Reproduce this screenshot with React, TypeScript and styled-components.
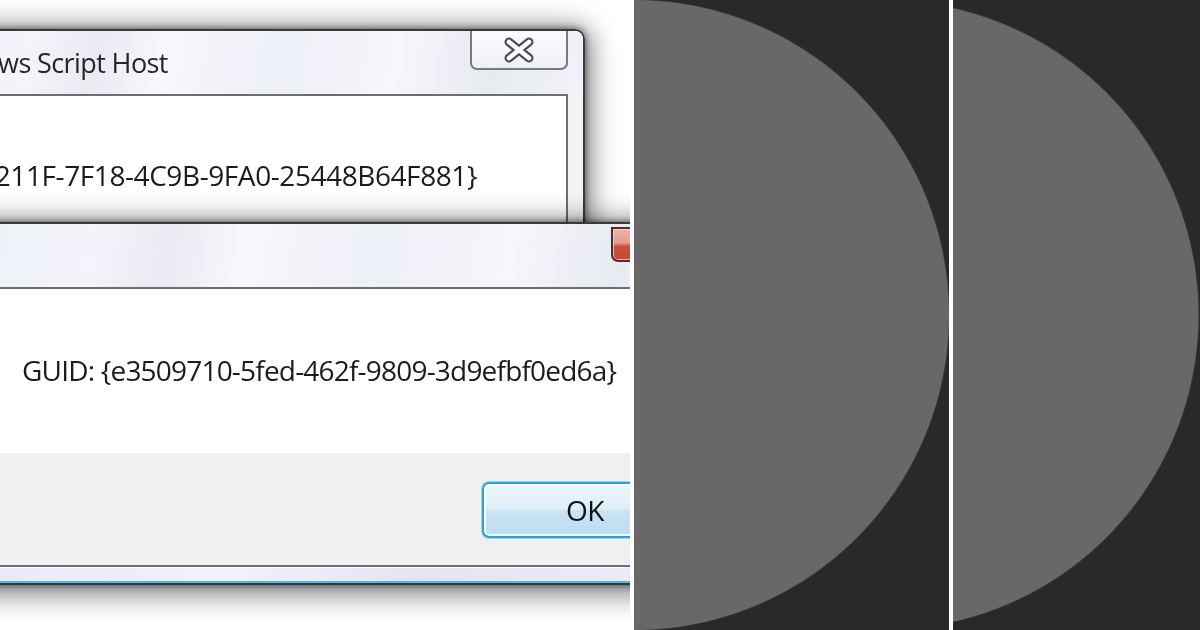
import React from "react";
import styled, { createGlobalStyle } from "styled-components";

const GlobalStyle = createGlobalStyle`
  html, body { margin: 0; padding: 0; background: #ffffff; }
  body { width: 1200px; height: 630px; overflow: hidden; font-family: "Open Sans", "Noto Sans", sans-serif; }
  * { box-sizing: border-box; }
`;

const Stage = styled.div`
  display: flex;
  width: 1200px;
  height: 630px;
  gap: 4px;
  background: #ffffff;
`;

const Desktop = styled.div`
  position: relative;
  flex: 0 0 630px;
  height: 630px;
  overflow: hidden;
  background: #ffffff;
  filter: blur(0.35px);
`;

const Panel = styled.div<{ $cx: number; $r: number; $w?: number }>`
  flex: ${(p) => (p.$w ? `0 0 ${p.$w}px` : "1 1 auto")};
  height: 630px;
  background: radial-gradient(
    circle ${(p) => p.$r}px at ${(p) => p.$cx}px 50%,
    #686868 0,
    #686868 ${(p) => p.$r - 1}px,
    #303030 ${(p) => p.$r}px,
    #292929 ${(p) => p.$r + 1}px
  );
`;

const Window = styled.div<{ $top: number; $left: number; $width: number }>`
  position: absolute;
  top: ${(p) => p.$top}px;
  left: ${(p) => p.$left}px;
  width: ${(p) => p.$width}px;
  display: flex;
  flex-direction: column;
  border: 2px solid #3a3a3a;
  border-radius: 10px 10px 0 0;
  background: linear-gradient(90deg, #ecebf6, #f4f3fa 40%, #eeedf7 70%, #f3f3f8);
  box-shadow: 0 0 7px rgba(0, 0, 0, 0.6), 0 4px 26px 7px rgba(0, 0, 0, 0.45);
`;

const TitleBar = styled.div`
  height: 63px;
  display: flex;
  align-items: flex-start;
  justify-content: space-between;
  border-radius: 8px 8px 0 0;
  background: linear-gradient(
    100deg,
    #eceef7 0%,
    #f4f5fb 18%,
    #e9eaf3 28%,
    #f7f7fc 38%,
    #eef0f7 55%,
    #f6f6fb 72%,
    #e8eaf2 86%,
    #f2f3f9 100%
  );
`;

const Title = styled.span`
  align-self: center;
  padding-left: 12px;
  font-size: 27px;
  letter-spacing: -0.6px;
  color: #262626;
  white-space: nowrap;
`;

const CloseInactive = styled.div`
  width: 98px;
  height: 39px;
  margin-right: 15px;
  display: flex;
  align-items: center;
  justify-content: center;
  border: 2px solid #7a7a7a;
  border-top: none;
  border-radius: 0 0 7px 7px;
  background: linear-gradient(#fbfbfd, #eff0f6);
`;

const CloseActive = styled.div`
  width: 103px;
  height: 35px;
  margin: 3px 10px 0 0;
  display: flex;
  align-items: center;
  justify-content: center;
  border: 2px solid #5a2a22;
  border-radius: 0 0 7px 7px;
  background: linear-gradient(#ecb6aa 0%, #e49d8f 45%, #cc4f38 56%, #c0493a 100%);
  box-shadow: inset 0 0 0 1px rgba(255, 220, 210, 0.7);
`;

const Client = styled.div`
  margin: 0 15px;
  display: flex;
  flex-direction: column;
  border: 2px solid #6e6e6e;
  background: #ffffff;
`;

const Message = styled.div<{ $h: number; $pt: number; $pl: number; $pr: number; $justify: string; $ls: number }>`
  height: ${(p) => p.$h}px;
  display: flex;
  align-items: flex-start;
  justify-content: ${(p) => p.$justify};
  padding: ${(p) => p.$pt}px ${(p) => p.$pr}px 0 ${(p) => p.$pl}px;
  font-size: 28px;
  line-height: 36px;
  letter-spacing: ${(p) => p.$ls}px;
  color: #1c1c1c;
  white-space: nowrap;
`;

const MessageText = styled.span`
  flex: none;
`;

const ButtonBar = styled.div`
  height: 112px;
  display: flex;
  justify-content: flex-end;
  align-items: flex-start;
  padding: 29px 19px 0 0;
  background: #f0f0f0;
`;

const OkButton = styled.button`
  width: 206px;
  height: 56px;
  padding: 0;
  border: 2px solid #2f9fdc;
  border-radius: 7px;
  background: linear-gradient(#eaf5fc 0%, #deeffa 48%, #c9e4f5 52%, #b9dcf1 100%);
  box-shadow: inset 0 0 0 2px rgba(255, 255, 255, 0.85), 0 0 0 1px rgba(60, 200, 240, 0.5);
  font-family: "Open Sans", "Noto Sans", sans-serif;
  font-size: 28px;
  letter-spacing: -0.5px;
  color: #111111;
`;

const BottomFrame = styled.div`
  height: 16px;
  background: linear-gradient(90deg, #e9e6f7, #f3f1fb 35%, #e6e3f5 60%, #efedf9);
  border-top: 1px solid #ffffff;
  border-bottom: 2px solid #38c2ec;
`;

const XGlyph = ({ color, fill }: { color: string; fill: string }) => (
  <svg width="32" height="26" viewBox="0 0 32 26">
    <g strokeLinecap="round">
      <path d="M6 5 L26 21 M26 5 L6 21" stroke={color} strokeWidth="9" />
      <path d="M6 5 L26 21 M26 5 L6 21" stroke={fill} strokeWidth="4.6" />
    </g>
  </svg>
);

export default function App() {
  return (
    <>
      <GlobalStyle />
      <Stage>
        <Desktop>
          <Window $top={29} $left={-94} $width={679}>
            <TitleBar>
              <Title>Windows Script Host</Title>
              <CloseInactive>
                <XGlyph color="#4c4c55" fill="#ffffff" />
              </CloseInactive>
            </TitleBar>
            <Client>
              <Message $h={300} $pt={61} $pl={0} $pr={89} $justify="flex-end" $ls={-0.42}>
                <MessageText>GUID: {"{"}9C4E211F-7F18-4C9B-9FA0-25448B64F881{"}"}</MessageText>
              </Message>
            </Client>
          </Window>
          <Window $top={222} $left={-50} $width={776}>
            <TitleBar>
              <span />
              <CloseActive>
                <XGlyph color="#6b2a20" fill="#ffffff" />
              </CloseActive>
            </TitleBar>
            <Client>
              <Message $h={164} $pt={63} $pl={53} $pr={0} $justify="flex-start" $ls={-0.8}>
                <MessageText>GUID: {"{"}e3509710-5fed-462f-9809-3d9efbf0ed6a{"}"}</MessageText>
              </Message>
              <ButtonBar>
                <OkButton>OK</OkButton>
              </ButtonBar>
            </Client>
            <BottomFrame />
          </Window>
        </Desktop>
        <Panel $w={315} $cx={0} $r={315.5} />
        <Panel $cx={-69} $r={315} />
      </Stage>
    </>
  );
}
